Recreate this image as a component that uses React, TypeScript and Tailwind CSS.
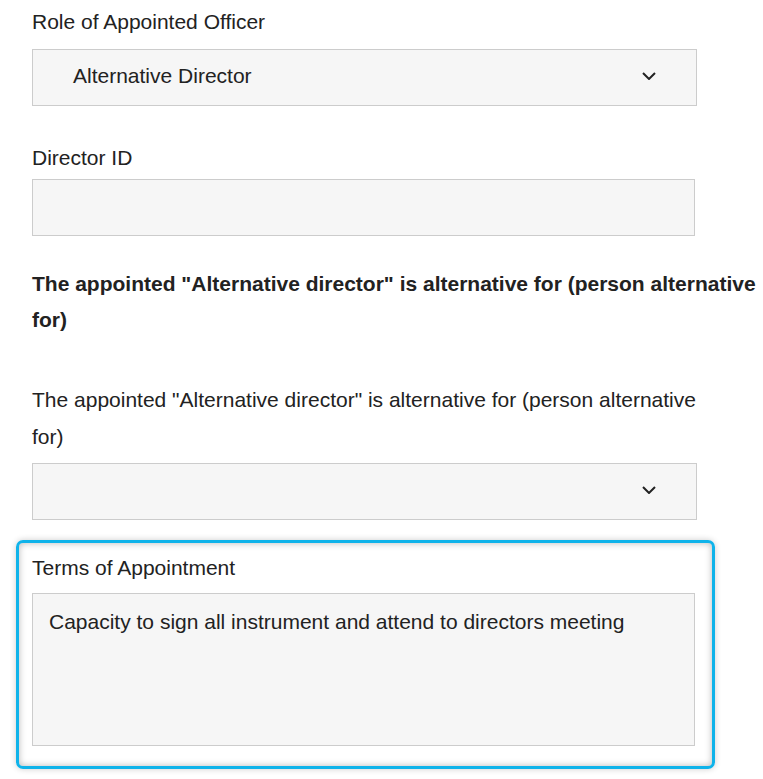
import React from 'react';

const font = { fontFamily: '"Liberation Sans", Arial, sans-serif' };

const Chevron = () => (
    <svg width="14" height="8" viewBox="0 0 14 8" fill="none" className="text-[#222]">
        <path d="M1 1L7 7L13 1" stroke="currentColor" strokeWidth="2" />
    </svg>
);

const SelectBox = ({ value }: { value?: string }) => (
    <div className="flex h-[57px] w-[665px] items-center justify-between border border-[#cccccc] bg-[#f6f6f6] pb-[3px] pl-[40px] pr-[40px]">
        <span className="text-[21px] leading-[28px] text-[#222]">{value}</span>
        <Chevron />
    </div>
);

export default function App() {
    return (
        <div className="min-h-[779px] bg-white pl-[32px] text-[#222]" style={font}>
            <div className="pt-[4px] text-[21px] leading-[36px]">Role of Appointed Officer</div>
            <div className="mt-[9px]">
                <SelectBox value="Alternative Director" />
            </div>

            <div className="mt-[34px] text-[21px] leading-[36px]">Director ID</div>
            <div className="mt-[3px] h-[57px] w-[663px] border border-[#cccccc] bg-[#f6f6f6]" />

            <div className="mt-[30px] w-[731px] text-[21px] font-bold leading-[36px]">
                The appointed "Alternative director" is alternative for (person alternative for)
            </div>

            <div className="mt-[44px] w-[665px] text-[21px] leading-[36.5px]">
                The appointed "Alternative director" is alternative for (person alternative for)
            </div>
            <div className="mt-[8px]">
                <SelectBox />
            </div>

            <div className="ml-[-16px] mt-[20px] w-[699px] rounded-[7px] border-[3px] border-[#0fb3ea] pb-[20px] pl-[13px] pr-[17px] pt-[7px] shadow-[inset_0_0_7px_rgba(0,0,0,0.28),0_0_6px_rgba(0,0,0,0.2)]">
                <div className="text-[21px] leading-[36px]">Terms of Appointment</div>
                <div className="mt-[7px] h-[153px] w-[663px] border border-[#cccccc] bg-[#f6f6f6] pl-[16px] pt-[10px] text-[21px] leading-[36px]">
                    Capacity to sign all instrument and attend to directors meeting
                </div>
            </div>
        </div>
    );
}
